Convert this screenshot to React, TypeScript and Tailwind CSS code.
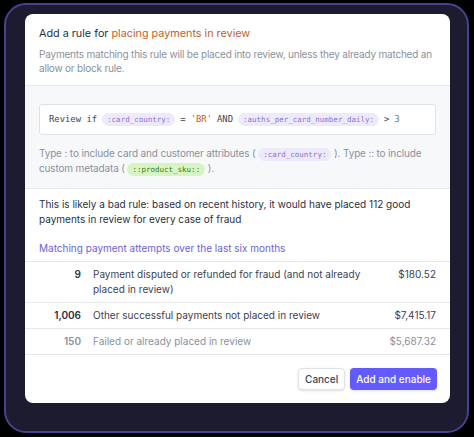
import React from 'react';

const sans = { fontFamily: 'Inter, "Noto Sans", sans-serif' };

function Pill({ children, green }: { children: React.ReactNode; green?: boolean }) {
  return (
    <span
      className={
        'inline-block align-middle rounded-full px-[5px] leading-[13px] text-[7.5px] tracking-normal font-["DejaVu_Sans_Mono",monospace] ' +
        (green ? 'bg-[#d7f5c4] text-[#3b7d1e]' : 'bg-[#eeeafc] text-[#8a72d6]')
      }
    >
      {children}
    </span>
  );
}

const rows = [
  { n: '9', text: 'Payment disputed or refunded for fraud (and not already placed in review)', amount: '$180.52', muted: false },
  { n: '1,006', text: 'Other successful payments not placed in review', amount: '$7,415.17', muted: false },
  { n: '150', text: 'Failed or already placed in review', amount: '$5,687.32', muted: true },
];

export default function App() {
  return (
    <div className="w-[474px] h-[437px] bg-black pt-[3px] pl-[4px] pr-[5px] pb-[4px]" style={sans}>
      <div className="h-full rounded-[22px] border-2 border-[#45438f] bg-[#1c1b30] pt-[9px] pl-[19px] pr-[17px] pb-[28px]">
        <div className="h-full rounded-[8px] bg-white overflow-hidden flex flex-col">
          <div className="px-[14px] pt-[10px] pb-[10px] border-b border-[#e6e8ec]">
            <h1 className="text-[10.8px] leading-[20px] text-[#2a2f45]">
              Add a rule for <span className="text-[#c0611f]">placing payments in review</span>
            </h1>
            <p className="mt-[3px] -mr-[4px] text-[10px] leading-[14px] tracking-[-0.2px] text-[#8a919e]">
              Payments matching this rule will be placed into review, unless they already matched an allow or block rule.
            </p>
          </div>

          <div className="bg-[#f7f8fa] px-[14px] pt-[18px] pb-[12px] border-b border-[#e6e8ec]">
            <div className="h-[31px] rounded-[3px] border border-[#dfe2e7] bg-white px-[9px] flex items-center gap-[5px] text-[8.9px] text-[#3c4257] font-['DejaVu_Sans_Mono',monospace] whitespace-nowrap">
              <span>Review if</span>
              <Pill>:card_country:</Pill>
              <span>=</span>
              <span className="text-[#c0611f]">'BR'</span>
              <span>AND</span>
              <Pill>:auths_per_card_number_daily:</Pill>
              <span>&gt;</span>
              <span className="text-[#3d86c6]">3</span>
            </div>
            <p className="mt-[11px] text-[10px] leading-[15px] tracking-[-0.15px] text-[#8a919e]">
              Type : to include card and customer attributes ( <Pill>:card_country:</Pill> ). Type :: to include custom metadata ( <Pill green>::product_sku::</Pill> ).
            </p>
          </div>

          <div className="px-[14px] pt-[8px] pb-[5px]">
            <p className="text-[10px] leading-[15px] text-[#2a2f45]">
              This is likely a bad rule: based on recent history, it would have placed 112 good payments in review for every case of fraud
            </p>
            <p className="mt-[14px] text-[10px] leading-[15px] text-[#6d62d8]">
              Matching payment attempts over the last six months
            </p>
          </div>

          <div className="border-t border-[#e6e8ec]">
            {rows.map((r) => (
              <div
                key={r.n}
                className={
                  'flex items-start px-[14px] py-[5px] border-b border-[#e6e8ec] text-[10px] leading-[15px] ' +
                  (r.muted ? 'text-[#8a919e]' : 'text-[#3c4257]')
                }
              >
                <span className={'w-[42px] shrink-0 text-right font-semibold ' + (r.muted ? '' : 'text-[#2a2f45]')}>{r.n}</span>
                <span className="ml-[12px] w-[270px]">{r.text}</span>
                <span className="ml-auto">{r.amount}</span>
              </div>
            ))}
          </div>

          <div className="flex justify-end gap-[5px] px-[13px] pt-[13px]">
            <button className="h-[22px] px-[6px] rounded-[4px] border border-[#e0e3e8] bg-white shadow-sm text-[10px] font-medium text-[#3c4257]">
              Cancel
            </button>
            <button className="h-[22px] px-[6px] rounded-[4px] bg-[#635bff] shadow-sm text-[10px] font-medium text-white">
              Add and enable
            </button>
          </div>
        </div>
      </div>
    </div>
  );
}
